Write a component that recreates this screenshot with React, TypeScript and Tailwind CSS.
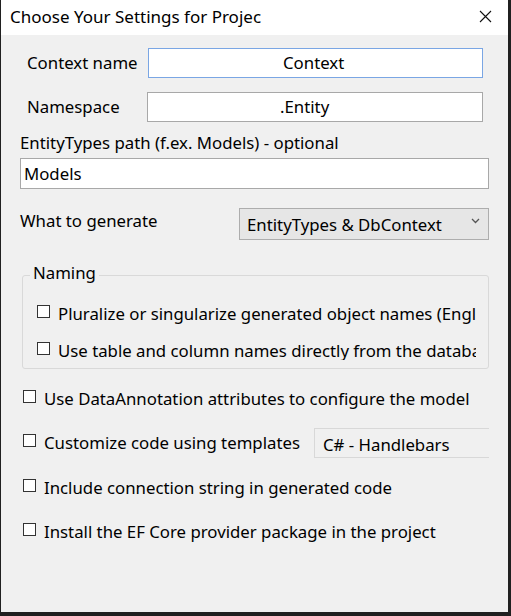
const font = { fontFamily: '"Noto Sans", "Open Sans", sans-serif' };

function Box() {
  return <span className="inline-block w-[13px] h-[13px] shrink-0 bg-white border border-[#333333]" />;
}

function Check({ label, className = '' }: { label: string; className?: string }) {
  return (
    <div className={`flex items-center gap-2 whitespace-nowrap h-[24px] ${className}`}>
      <Box />
      <span className="-mt-[1px] leading-[24px] translate-y-[3px]">{label}</span>
    </div>
  );
}

export default function App() {
  return (
    <div
      className="relative w-[511px] h-[616px] bg-[#f0f0f0] border-l border-r-[3px] border-b-4 border-[#202020] text-[16.8px] text-black flex flex-col overflow-hidden"
      style={font}
    >
      <div className="h-[35px] bg-white flex items-center justify-between pl-[9px] pr-[16px] shrink-0">
        <span className="text-[17px] -mt-[2px]">Choose Your Settings for Projec</span>
        <svg width="13" height="13" viewBox="0 0 13 13" className="-mt-[2px]">
          <path d="M1 1 L12 12 M12 1 L1 12" stroke="#111" strokeWidth="1.1" />
        </svg>
      </div>

      <div className="flex flex-col pl-[19px] pr-[19px]">
        <div className="flex items-center mt-[13px] h-[30px]">
          <span className="w-[128px] pl-[7px]">Context name</span>
          <div className="flex-1 h-[30px] mr-[6px] bg-white border border-[#7aa6e4] flex items-center pl-[134px]">
            Context
          </div>
        </div>
        <div className="flex items-center mt-[14px] h-[30px]">
          <span className="w-[127px] pl-[7px]">Namespace</span>
          <div className="flex-1 h-[30px] mr-[6px] bg-white border border-[#a8a8a8] flex items-center pl-[132px]">
            .Entity
          </div>
        </div>

        <div className="mt-[9px] leading-[24px]">EntityTypes path (f.ex. Models) - optional</div>
        <div className="h-[31px] mt-[3px] bg-white border border-[#a8a8a8] flex items-center pl-[3px]">Models</div>

        <div className="flex items-center justify-between mt-[19px]">
          <span className="-mt-[6px]">What to generate</span>
          <div className="w-[250px] h-[32px] bg-[#e6e6e6] border border-[#adadad] flex items-center justify-between pl-[7px] pr-[8px]">
            <span className="mt-[2px]">EntityTypes &amp; DbContext</span>
            <svg width="9" height="6" viewBox="0 0 9 6" className="-mt-[6px]">
              <path d="M1 1 L4.5 4.5 L8 1" stroke="#555" strokeWidth="1.3" fill="none" />
            </svg>
          </div>
        </div>

        <div className="mt-[35px] h-[94px] ml-[2px] border border-[#d9d9d9] rounded-[3px] pr-[12px]">
          <div className="flex flex-col pl-[14px] pt-[23px] gap-[13px] overflow-hidden">
            <Check label="Pluralize or singularize generated object names (English)" />
            <Check label="Use table and column names directly from the database" />
          </div>
        </div>
        <span className="absolute left-[29px] top-[262px] px-[3px] bg-[#f0f0f0] leading-[22px]">Naming</span>

        <Check className="mt-[15px] pl-[3px]" label="Use DataAnnotation attributes to configure the model" />

        <div className="flex items-start mt-[20px] pl-[3px]">
          <Check label="Customize code using templates" />
          <div className="ml-[14px] flex-1 h-[30px] -mb-[6px] border-y border-l border-[#d8d8d8] bg-[#f0f0f0] pl-[8px] pt-[3px] flex items-center overflow-hidden whitespace-nowrap">
            <span>C# - Handlebars</span>
          </div>
        </div>

        <Check className="mt-[21px] pl-[3px]" label="Include connection string in generated code" />
        <Check className="mt-[20px] pl-[3px]" label="Install the EF Core provider package in the project" />
      </div>
    </div>
  );
}
